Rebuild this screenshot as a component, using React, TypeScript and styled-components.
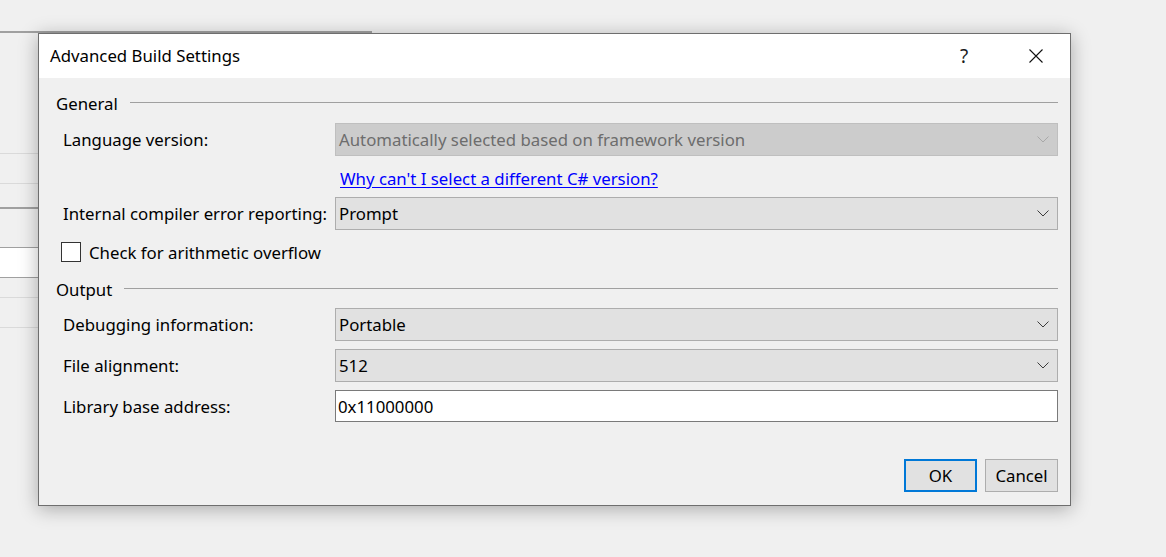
import React from "react"
import styled, { createGlobalStyle } from "styled-components"

const FONT = `"Noto Sans", "Open Sans", "Liberation Sans", sans-serif`

const GlobalStyle = createGlobalStyle`
  html, body {
    margin: 0;
    padding: 0;
    background: #f0f0f0;
    font-family: ${FONT};
    font-size: 16.8px;
    color: #000;
  }
  * {
    box-sizing: border-box;
  }
`

const Screen = styled.div`
  position: relative;
  width: 1166px;
  height: 557px;
  overflow: hidden;
  background: #f0f0f0;
`

/* the window that sits behind the dialog */
const BackWindow = styled.div`
  padding-top: 31px;
  width: 372px;
`

const BackTopRule = styled.div`
  height: 2px;
  background: #a0a0a0;
`

const BackRow = styled.div<{ h: number; line: string; thick?: boolean; white?: boolean }>`
  height: ${p => p.h}px;
  border-bottom: ${p => (p.thick ? 2 : 1)}px solid ${p => p.line};
  background: ${p => (p.white ? "#ffffff" : "transparent")};
`

const Dialog = styled.div`
  position: absolute;
  left: 38px;
  top: 33px;
  width: 1033px;
  border: 1px solid #6e6e6e;
  background: #f0f0f0;
  box-shadow: 0 3px 18px rgba(0, 0, 0, 0.3);
`

const TitleBar = styled.div`
  height: 44px;
  background: #ffffff;
  display: flex;
  align-items: center;
  padding: 0 6px 0 11px;
`

const Title = styled.div`
  flex: 1;
  padding-bottom: 1px;
`

const CaptionButton = styled.div<{ gapRight?: number }>`
  width: 56px;
  height: 44px;
  display: flex;
  align-items: center;
  justify-content: center;
  margin-right: ${p => p.gapRight ?? 0}px;
  font-size: 19px;
  color: #1a1a1a;
`

const Body = styled.div`
  padding: 15px 12px 13px 17px;
  display: flex;
  flex-direction: column;
`

const GroupHeader = styled.div<{ mt?: number }>`
  display: flex;
  align-items: center;
  height: 20px;
  margin-top: ${p => p.mt ?? 0}px;
  gap: 12px;
`

const GroupRule = styled.div`
  flex: 1;
  height: 1px;
  background: #a0a0a0;
  margin-top: -1px;
`

const FieldRow = styled.div<{ mt: number; h?: number }>`
  display: flex;
  align-items: center;
  height: ${p => p.h ?? 33}px;
  margin-top: ${p => p.mt}px;
  padding-left: 7px;
`

const Label = styled.div`
  width: 272px;
  flex-shrink: 0;
`

const Combo = styled.div<{ disabled?: boolean }>`
  flex: 1;
  height: 100%;
  display: flex;
  align-items: center;
  padding: 0 8px 0 3px;
  background: ${p => (p.disabled ? "#cccccc" : "#e1e1e1")};
  border: 1px solid ${p => (p.disabled ? "#bfbfbf" : "#adadad")};
  color: ${p => (p.disabled ? "#6d6d6d" : "#000")};
`

const ComboText = styled.span`
  flex: 1;
`

const TextBox = styled.div`
  flex: 1;
  height: 100%;
  display: flex;
  align-items: center;
  padding-left: 2px;
  background: #ffffff;
  border: 1px solid #7a7a7a;
`

const LinkRow = styled.div`
  height: 24px;
  margin: 10px 0 7px;
  display: flex;
  align-items: center;
  padding-left: 284px;
`

const Link = styled.a`
  color: #0000ff;
  text-decoration: underline;
  text-underline-offset: 2px;
  cursor: pointer;
`

const CheckRow = styled.div`
  display: flex;
  align-items: center;
  height: 24px;
  margin-top: 10px;
  padding-left: 5px;
  gap: 8px;
`

const CheckBox = styled.div`
  width: 20px;
  height: 20px;
  background: #ffffff;
  border: 1px solid #333333;
`

const Footer = styled.div`
  display: flex;
  justify-content: flex-end;
  gap: 8px;
  margin-top: 37px;
`

const Button = styled.div<{ primary?: boolean }>`
  width: 73px;
  height: 33px;
  display: flex;
  align-items: center;
  justify-content: center;
  background: #e1e1e1;
  border: ${p => (p.primary ? "2px solid #0078d7" : "1px solid #adadad")};
  padding-bottom: 1px;
`

const Chevron: React.FC<{ color: string }> = ({ color }) => (
  <svg width="12" height="7" viewBox="0 0 12 7">
    <path d="M0.5 0.5 L6 6 L11.5 0.5" fill="none" stroke={color} strokeWidth="1" />
  </svg>
)

const CloseIcon = () => (
  <svg width="14" height="14" viewBox="0 0 14 14">
    <path d="M0.5 0.5 L13.5 13.5 M13.5 0.5 L0.5 13.5" stroke="#111" strokeWidth="1.1" fill="none" />
  </svg>
)

const Select: React.FC<{ value: string; disabled?: boolean }> = ({ value, disabled }) => (
  <Combo disabled={disabled}>
    <ComboText>{value}</ComboText>
    <Chevron color={disabled ? "#a8a8a8" : "#3c3c3c"} />
  </Combo>
)

const App: React.FC = () => {
  return (
    <Screen>
      <GlobalStyle />
      <BackWindow>
        <BackTopRule />
        <BackRow h={121} line="#dadada" />
        <BackRow h={30} line="#dadada" />
        <BackRow h={25} line="#a0a0a0" thick />
        <BackRow h={39} line="#a0a0a0" />
        <BackRow h={30} line="#a0a0a0" white />
        <BackRow h={20} line="#dadada" />
        <BackRow h={30} line="#dadada" />
      </BackWindow>

      <Dialog>
        <TitleBar>
          <Title>Advanced Build Settings</Title>
          <CaptionButton gapRight={16}>?</CaptionButton>
          <CaptionButton>
            <CloseIcon />
          </CaptionButton>
        </TitleBar>

        <Body>
          <GroupHeader>
            <span>General</span>
            <GroupRule />
          </GroupHeader>
          <FieldRow mt={10}>
            <Label>Language version:</Label>
            <Select value="Automatically selected based on framework version" disabled />
          </FieldRow>
          <LinkRow>
            <Link>Why can't I select a different C# version?</Link>
          </LinkRow>
          <FieldRow mt={0}>
            <Label>Internal compiler error reporting:</Label>
            <Select value="Prompt" />
          </FieldRow>
          <CheckRow>
            <CheckBox />
            <span>Check for arithmetic overflow</span>
          </CheckRow>

          <GroupHeader mt={15}>
            <span>Output</span>
            <GroupRule />
          </GroupHeader>
          <FieldRow mt={9}>
            <Label>Debugging information:</Label>
            <Select value="Portable" />
          </FieldRow>
          <FieldRow mt={8}>
            <Label>File alignment:</Label>
            <Select value="512" />
          </FieldRow>
          <FieldRow mt={8} h={32}>
            <Label>Library base address:</Label>
            <TextBox>0x11000000</TextBox>
          </FieldRow>

          <Footer>
            <Button primary>OK</Button>
            <Button>Cancel</Button>
          </Footer>
        </Body>
      </Dialog>
    </Screen>
  )
}

export default App
